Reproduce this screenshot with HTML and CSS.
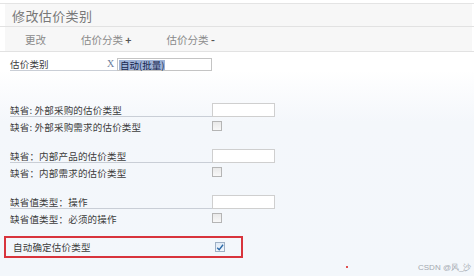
FILE: index.html
```html
<!DOCTYPE html>
<html lang="zh">
<head>
<meta charset="utf-8">
<title>修改估价类别</title>
<link rel="stylesheet" href="styles.css">
</head>
<body>
<div class="top"></div>
<div class="titlebar"><span class="title">修改估价类别</span></div>
<div class="toolbar">
  <span class="tb">更改</span>
  <span class="tb">估价分类 <b>+</b></span>
  <span class="tb">估价分类 <b>-</b></span>
</div>
<div class="content">
  <div class="group">
    <div class="row">
      <span class="label short">估价类别</span><span class="xmark">X</span><span class="field"><span class="sel">自动(批量)</span></span>
    </div>
    <div class="row cb"></div>
  </div>
  <div class="group">
    <div class="row"><span class="label">缺省: 外部采购的估价类型</span><span class="input"></span></div>
    <div class="row cb"><span class="label">缺省: 外部采购需求的估价类型</span><span class="check"></span></div>
  </div>
  <div class="group">
    <div class="row"><span class="label">缺省：内部产品的估价类型</span><span class="input"></span></div>
    <div class="row cb"><span class="label">缺省：内部需求的估价类型</span><span class="check"></span></div>
  </div>
  <div class="group last">
    <div class="row"><span class="label">缺省值类型：操作</span><span class="input"></span></div>
    <div class="row cb"><span class="label">缺省值类型：必须的操作</span><span class="check"></span></div>
  </div>
  <div class="flag">
    <span class="label">自动确定估价类型</span>
    <span class="check on"><svg viewBox="0 0 10 10" width="9" height="9"><path d="M1.5 5.2 L4 7.8 L8.8 1.6" fill="none" stroke="#2b6aa8" stroke-width="1.7"/></svg></span>
  </div>
  <div class="foot"><span class="dot"></span><span class="wm">CSDN @风_沙</span></div>
</div>
</body>
</html>
```
FILE: styles.css
```css
* { box-sizing: border-box; }
html, body { margin: 0; padding: 0; }
body {
  width: 474px;
  height: 276px;
  overflow: hidden;
  background: #fff;
  font-family: "Noto Sans CJK SC", "Noto Sans", sans-serif;
  color: #333;
}
.top {
  height: 4px;
  border-bottom: 1px solid #e4e4e4;
}
.titlebar {
  height: 23px;
  border-bottom: 1px solid #e2e2e2;
  background: linear-gradient(to right, #fff 0 5px, #f7f7f7 5px calc(100% - 2px), #fff calc(100% - 2px));
  padding-left: 12px;
  display: flex;
  align-items: center;
}
.title {
  font-size: 13px;
  color: #787878;
  letter-spacing: 0.4px;
}
.toolbar {
  height: 25px;
  border-bottom: 1px solid #e2e2e2;
  background: linear-gradient(to right, #fff 0 5px, #f7f7f7 5px calc(100% - 2px), #fff calc(100% - 2px));
  padding-left: 25px;
  display: flex;
  align-items: center;
  gap: 35px;
}
.tb {
  font-size: 10.5px;
  color: #8a8a8a;
}
.tb b { color: #555; font-weight: bold; }
.content {
  height: 224px;
  padding: 5px 0 0 10px;
  background: linear-gradient(#fff 0, #fff 18px, #f4f7fb 70px, #f3f7fb 100%);
}
.group { margin-bottom: 16px; }
.group.last { margin-bottom: 11px; }
.row {
  display: flex;
  height: 14px;
}
.row.cb {
  height: 16px;
  padding-top: 3px;
}
.label {
  width: 202px;
  flex: none;
  font-size: 9.5px;
  line-height: 14px;
  height: 14px;
  color: #3c3c3c;
  white-space: nowrap;
  letter-spacing: 0.2px;
}
.row:not(.cb) .label { border-bottom: 1px solid #c9ced6; height: 14px; }
.row.cb .label { height: 13px; line-height: 14px; }
.label.short { width: 97px; }
.xmark {
  width: 10px;
  height: 14px;
  flex: none;
  border-bottom: 1px solid #c9ced6;
  font-family: "Liberation Serif", serif;
  font-size: 10px;
  line-height: 13px;
  color: #6a7c9c;
}
.field {
  width: 95px;
  height: 13px;
  margin-top: 1px;
  border: 1px solid #c4c4c4;
  background: #fff;
  display: flex;
  align-items: center;
  padding-left: 1px;
}
.sel {
  background: #9db2d6;
  color: #17254d;
  font-size: 9.5px;
  line-height: 10px;
  height: 10px;
  padding: 0 1px;
}
.input {
  width: 63px;
  height: 14px;
  border: 1px solid #cfcfcf;
  background: #fff;
}
.check {
  width: 10px;
  height: 10px;
  flex: none;
  margin-top: 1px;
  border: 1px solid #b5b5b5;
  background: linear-gradient(#e9e9e9, #f8f8f8);
  display: flex;
  align-items: center;
  justify-content: center;
}
.check.on {
  border-color: #9fb0c4;
  background: linear-gradient(#dfeaf6, #f3f7fc);
  margin-top: 0;
}
.flag {
  margin-left: -6px;
  width: 239px;
  height: 22px;
  border: 2px solid #d8343c;
  padding-left: 7px;
  display: flex;
  align-items: center;
}
.flag .label { height: 14px; }
.foot {
  height: 18px;
  display: flex;
  align-items: center;
  padding-left: 336px;
}
.dot {
  width: 2px;
  height: 2px;
  background: #e05050;
}
.wm {
  margin-left: 70px;
  font-family: "Liberation Sans", sans-serif;
  font-size: 8px;
  color: #a3a9b0;
}
```
